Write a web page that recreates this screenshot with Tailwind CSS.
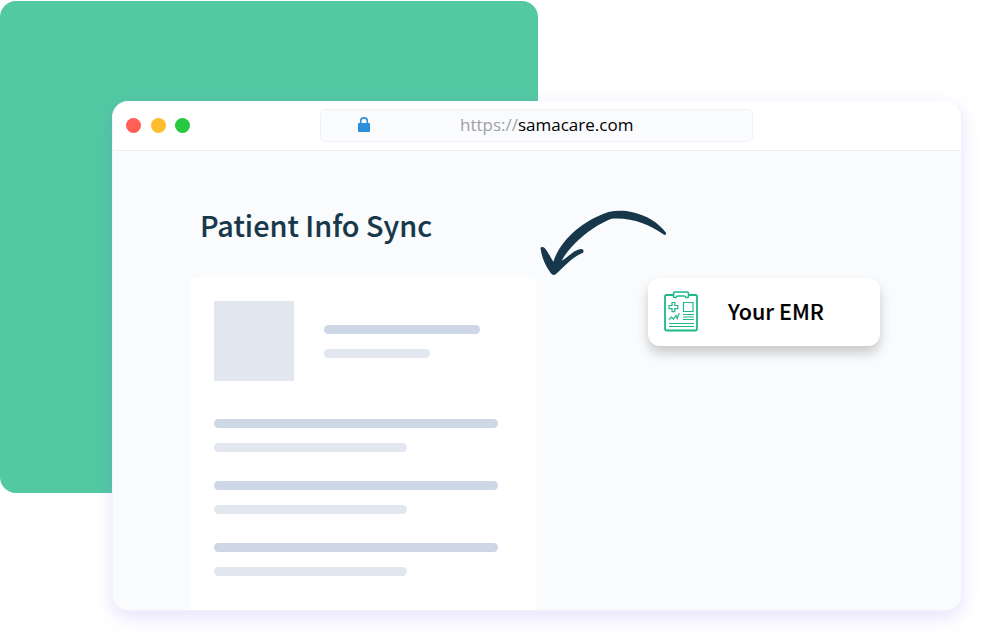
<!DOCTYPE html>
<html lang="en">
<head>
  <meta charset="UTF-8">
  <meta name="viewport" content="width=device-width, initial-scale=1.0">
  <title>Patient Info Sync</title>
  <script src="https://cdn.jsdelivr.net/npm/@tailwindcss/browser@4"></script>
</head>

<body class="bg-white overflow-hidden">
  <div class="relative w-[1000px] h-[638px] pt-[101px] pl-28">
    <!-- Green backdrop -->
    <div class="absolute left-0 top-px w-[538px] h-[492px] rounded-2xl bg-[#53c9a2]"></div>

    <!-- Browser window -->
    <div class="relative flex flex-col w-[850px] h-[510px] rounded-2xl overflow-hidden bg-[#fafbfd] border border-[#f1f3f9] border-t-white shadow-[0_6px_18px_rgba(120,80,240,0.17)]">
      <header class="flex items-center h-[49px] shrink-0 bg-white border-b border-[#eceef3] pl-[13px] pb-px">
        <div class="flex gap-[9.5px] w-[194px]">
          <span class="size-[15px] rounded-full bg-[#ff5f57]"></span>
          <span class="size-[15px] rounded-full bg-[#ffbd2e]"></span>
          <span class="size-[15px] rounded-full bg-[#28c840]"></span>
        </div>
        <div class="flex items-center w-[433px] h-[33px] rounded-[5px] bg-[#fafbfd] border border-[#eff1f6] pl-[37px]">
          <svg class="w-3 h-[15px] -mt-[2px]" viewBox="0 0 12 15" fill="none">
            <path d="M2.7 7V4.2a3.3 3.3 0 0 1 6.6 0V7" stroke="#2b8fdc" stroke-width="1.6"/>
            <rect y="6" width="12" height="9" rx="1" fill="#2b8fdc"/>
          </svg>
          <p class="ml-[90px] -mt-[2px] text-[17px] whitespace-nowrap text-black font-['Open_Sans','Noto_Sans',sans-serif]"><span class="text-[#a0a0a4]">https://</span>samacare.com</p>
        </div>
      </header>

      <main class="flex flex-1 min-h-0">
        <section class="w-[346px] ml-[77px] pt-[52px]">
          <h1 class="h-[74px] pl-[10px] text-[28.8px] leading-[43px] whitespace-nowrap font-medium text-[#17374b] [-webkit-text-stroke:0.15px_#17374b] font-['Noto_Sans_CJK_SC',sans-serif]">Patient Info Sync</h1>
          <div class="h-[340px] rounded-t-lg bg-white pt-6 pl-6">
            <div class="flex gap-[30px]">
              <div class="size-20 bg-[#e2e7ef]"></div>
              <div class="pt-6">
                <div class="w-[156px] h-[9px] rounded-full bg-[#cdd7e6]"></div>
                <div class="mt-[15px] w-[106px] h-[9px] rounded-full bg-[#e2e7ef]"></div>
              </div>
            </div>
            <div class="flex flex-col gap-[29px] mt-[38px]">
              <div>
                <div class="w-[284px] h-[9px] rounded-full bg-[#cdd7e6]"></div>
                <div class="mt-[15px] w-[192.5px] h-[9px] rounded-full bg-[#e2e7ef]"></div>
              </div>
              <div>
                <div class="w-[284px] h-[9px] rounded-full bg-[#cdd7e6]"></div>
                <div class="mt-[15px] w-[192.5px] h-[9px] rounded-full bg-[#e2e7ef]"></div>
              </div>
              <div>
                <div class="w-[284px] h-[9px] rounded-full bg-[#cdd7e6]"></div>
                <div class="mt-[15px] w-[192.5px] h-[9px] rounded-full bg-[#e2e7ef]"></div>
              </div>
            </div>
          </div>
        </section>

        <section class="ml-[112px] mt-[127px] flex items-center w-[232px] h-[68px] rounded-xl bg-white pl-4 shadow-[0_7px_12px_rgba(0,0,0,0.2)]">
          <!-- Clipboard -->
          <svg class="w-[34px] h-[41px] -mt-[2px] shrink-0" viewBox="0 0 34 41" fill="none" stroke="#1eb88a">
            <path d="M9 4H2.5Q1 4 1 5.500V38Q1 39.500 2.500 39.500H31.500Q33 39.500 33 38V5.500Q33 4 31.500 4H25" stroke-width="1.800"/>
            <path d="M9.500 2.500Q9.500 1 11 1H23Q24.500 1 24.500 2.500V5.500Q24.500 6.500 23.500 6.500H22Q21.500 5 20 5H14Q12.500 5 12 6.500H10.500Q9.500 6.500 9.500 5.500Z" stroke-width="1.600"/>
            <path d="M8 11.500h2.800v3h3v3.200h-3v3H8v-3H5v-3.200h3z" stroke-width="1.200"/>
            <path d="M19.500 11.500h9.500v9h-9.500z" stroke-width="1.200"/>
            <path d="M5 28.500l2.500-2.500 2 2 2.500-3.500 1.200 3 2-5.500M19 23.500h11M19 26h11M19 28.500h11M5 32.500h25M5 35.500h25" stroke-width="1.200"/>
          </svg>
          <span class="ml-[30px] text-[21.5px] leading-[34px] -mt-[3px] whitespace-nowrap font-medium text-black [-webkit-text-stroke:0.15px_black] font-['Noto_Sans_CJK_SC',sans-serif]">Your EMR</span>
        </section>
      </main>

      <!-- Arrow from the EMR to the patient record -->
      <svg class="absolute left-[407px] top-[98px] w-40 h-[85px]" viewBox="0 0 480 255" fill="#17374b">
        <path d="M62 147C60 141 68 139 73 143C83 152 89 169 100 185C120 125 180 65 265 36C290 31 315 32 335 36C380 46 415 68 438 98C440 104 435 107 430 103C388 73 335 52 275 56C215 78 148 137 125 182C145 172 160 150 182 147C190 146 193 153 189 158C155 173 132 200 107 223C102 226 97 225 92 219C75 195 65 172 62 147Z"/>
      </svg>
    </div>
  </div>
</body>
</html>
